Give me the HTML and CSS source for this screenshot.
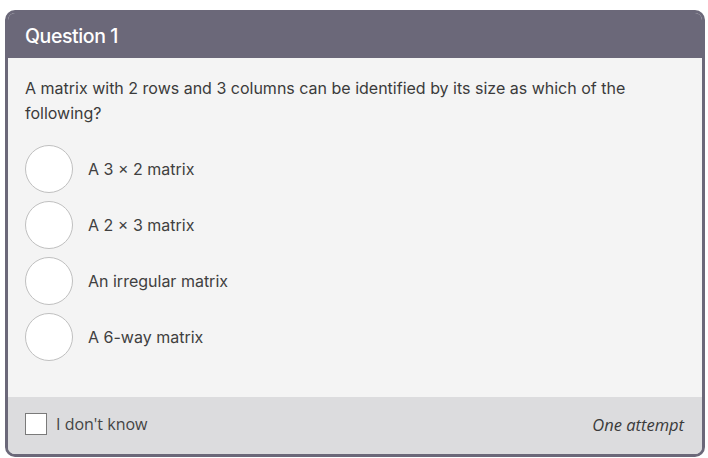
FILE: index.html
```html
<!DOCTYPE html>
<html>
<head>
<meta charset="utf-8">
<link rel="stylesheet" href="styles.css">
</head>
<body>
<div class="card">
  <div class="card-header">Question 1</div>
  <div class="card-body">
    <p class="question">A matrix with 2 rows and 3 columns can be identified by its size as which of the following?</p>
    <ul class="options">
      <li class="option"><span class="radio"></span><span class="label">A 3 × 2 matrix</span></li>
      <li class="option"><span class="radio"></span><span class="label">A 2 × 3 matrix</span></li>
      <li class="option"><span class="radio"></span><span class="label">An irregular matrix</span></li>
      <li class="option"><span class="radio"></span><span class="label">A 6-way matrix</span></li>
    </ul>
  </div>
  <div class="card-footer">
    <label class="dontknow"><span class="checkbox"></span><span>I don't know</span></label>
    <span class="attempts">One attempt</span>
  </div>
</div>
</body>
</html>
```
FILE: styles.css
```css
html, body {
  margin: 0;
  padding: 0;
  background: #ffffff;
}
body {
  padding: 10px 3px 0 5px;
  font-family: Inter, "Noto Sans", sans-serif;
}
.card {
  width: 700px;
  height: 447px;
  box-sizing: border-box;
  border: 3px solid #6b6879;
  border-radius: 10px;
  overflow: hidden;
  display: flex;
  flex-direction: column;
  background: #f4f4f4;
}
.card-header {
  background: #6b6879;
  color: #ffffff;
  height: 45px;
  box-sizing: border-box;
  padding: 0 17px;
  display: flex;
  align-items: center;
  font-size: 19.5px;
  font-weight: 500;
  letter-spacing: -0.4px;
}
.card-body {
  flex: 1;
  padding: 18px 17px 0 17px;
}
.question {
  margin: 0;
  font-size: 16px;
  line-height: 25px;
  color: #3b3b3b;
}
.options {
  list-style: none;
  margin: 19px 0 0 0;
  padding: 0;
  display: flex;
  flex-direction: column;
  gap: 8px;
}
.option {
  display: flex;
  align-items: center;
  height: 48px;
}
.radio {
  width: 48px;
  height: 48px;
  box-sizing: border-box;
  border: 1.5px solid #c0c0c0;
  border-radius: 50%;
  background: #ffffff;
  flex: none;
}
.label {
  margin-left: 15px;
  font-size: 16px;
  color: #404040;
}
.card-footer {
  height: 57px;
  background: #dcdcde;
  display: flex;
  align-items: center;
  justify-content: space-between;
  padding: 0 18px 3px 17px;
  box-sizing: border-box;
  font-family: "Open Sans", sans-serif;
  font-size: 16px;
  color: #444444;
}
.dontknow {
  display: flex;
  align-items: center;
  gap: 9px;
}
.checkbox {
  width: 22px;
  height: 22px;
  box-sizing: border-box;
  border: 1.5px solid #7a7a7a;
  background: #ffffff;
}
.attempts {
  font-style: italic;
  font-size: 16.5px;
  color: #3a3a3a;
}
```
